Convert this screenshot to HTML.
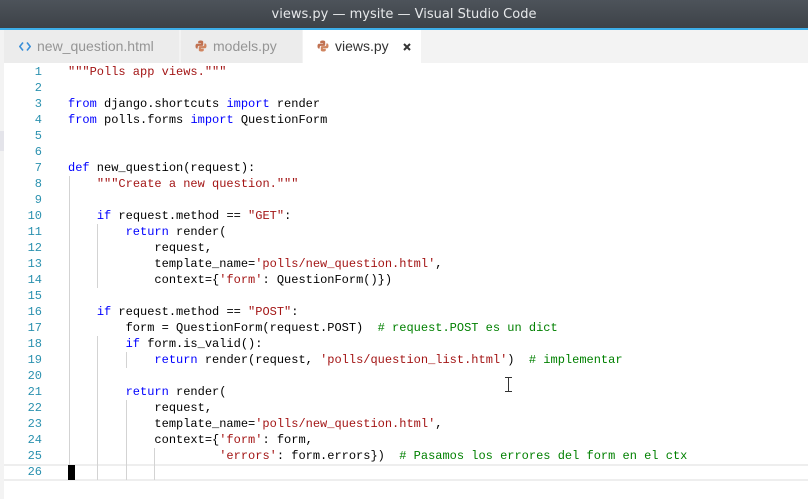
<!DOCTYPE html>
<html><head><meta charset="utf-8"><style>
*{margin:0;padding:0;box-sizing:border-box}
body{width:808px;height:499px;overflow:hidden;background:#fff;font-family:"Liberation Sans",sans-serif;position:relative}
#title{position:absolute;left:0;top:0;width:808px;height:28px;background:linear-gradient(#4d535a,#3d4248);color:#e6e8ea;font-size:13px;text-align:center;line-height:29px;font-family:"DejaVu Sans","Liberation Sans",sans-serif}
#bl{position:absolute;left:0;top:28px;width:808px;height:2px;background:#3daee9}
#tabs{position:absolute;left:0;top:30px;width:808px;height:33px;background:#f3f3f3}
.tab{position:absolute;top:0;height:33px;font-size:14px;line-height:33px;color:#959595;font-family:"Liberation Sans",sans-serif}
#strip{position:absolute;left:0;top:63px;width:4px;height:436px;background:#f3f3f3}
#strip2{position:absolute;left:0;top:131px;width:4px;height:20px;background:#e4e4ea}
.ln{position:absolute;left:0;width:42px;text-align:right;color:#2b91af;font:12px/16px "Liberation Mono",monospace}
.cd{position:absolute;left:68px;white-space:pre;color:#000;font:12px/16px "Liberation Mono",monospace}
.k{color:#0000ff}.s{color:#a31515}.c{color:#008000}
.g{position:absolute;width:1px;background:#d3d3d3}
#ed{position:absolute;left:0;top:1px;width:808px;height:499px}
</style></head><body>
<div id="title">views.py — mysite — Visual Studio Code</div>
<div id="bl"></div>
<div id="tabs">
 <div class="tab" style="left:4px;width:176px;background:#ececec;border-right:1px solid #f3f3f3"><svg style="position:absolute;left:15px;top:12px" width="12" height="9" viewBox="0 0 12 9"><path d="M4 0.5L0.8 4.5 4 8.5M8 0.5L11.2 4.5 8 8.5" fill="none" stroke="#3a8fd8" stroke-width="1.6"/></svg><span style="position:absolute;left:33px">new_question.html</span></div>
 <div class="tab" style="left:181px;width:121px;background:#ececec"><svg style="position:absolute;left:14px;top:10px" width="12" height="12" viewBox="0 0 12 12"><path d="M6 0.5C3 0.5 3.2 1.8 3.2 1.8V3.2H6.1V3.7H2C2 3.7 0.5 3.6 0.5 6.1 0.5 8.6 1.8 8.5 1.8 8.5H2.7V7.3C2.7 7.3 2.7 5.9 4.1 5.9H6.9C6.9 5.9 8.2 5.9 8.2 4.7V2C8.2 2 8.4 0.5 6 0.5Z" fill="#c07050"/><path d="M6 11.5C9 11.5 8.8 10.2 8.8 10.2V8.8H5.9V8.3H10C10 8.3 11.5 8.4 11.5 5.9 11.5 3.4 10.2 3.5 10.2 3.5H9.3V4.7C9.3 4.7 9.3 6.1 7.9 6.1H5.1C5.1 6.1 3.8 6.1 3.8 7.3V10C3.8 10 3.6 11.5 6 11.5Z" fill="#d08560"/></svg><span style="position:absolute;left:32px">models.py</span></div>
 <div class="tab" style="left:303px;width:118px;background:#fff;color:#333"><svg style="position:absolute;left:14px;top:10px" width="12" height="12" viewBox="0 0 12 12"><path d="M6 0.5C3 0.5 3.2 1.8 3.2 1.8V3.2H6.1V3.7H2C2 3.7 0.5 3.6 0.5 6.1 0.5 8.6 1.8 8.5 1.8 8.5H2.7V7.3C2.7 7.3 2.7 5.9 4.1 5.9H6.9C6.9 5.9 8.2 5.9 8.2 4.7V2C8.2 2 8.4 0.5 6 0.5Z" fill="#c07050"/><path d="M6 11.5C9 11.5 8.8 10.2 8.8 10.2V8.8H5.9V8.3H10C10 8.3 11.5 8.4 11.5 5.9 11.5 3.4 10.2 3.5 10.2 3.5H9.3V4.7C9.3 4.7 9.3 6.1 7.9 6.1H5.1C5.1 6.1 3.8 6.1 3.8 7.3V10C3.8 10 3.6 11.5 6 11.5Z" fill="#d08560"/></svg><span style="position:absolute;left:32px">views.py</span><svg style="position:absolute;left:100px;top:13px" width="8" height="8" viewBox="0 0 8 8"><path d="M1 1L7 7M7 1L1 7" stroke="#333" stroke-width="2"/></svg></div>
</div>
<div id="strip"></div><div id="strip2"></div>
<div id="ed">
<div style="position:absolute;left:4px;top:463px;width:804px;height:17px;border-top:2px solid #eeeeee;border-bottom:2px solid #eeeeee"></div>
<div class="g" style="left:69px;top:175px;height:304px"></div>
<div class="g" style="left:97px;top:223px;height:64px"></div>
<div class="g" style="left:97px;top:335px;height:144px"></div>
<div class="g" style="left:126px;top:351px;height:16px"></div>
<div class="g" style="left:126px;top:399px;height:80px"></div>
<div class="g" style="left:154px;top:447px;height:32px"></div>
<div style="position:absolute;left:68px;top:464px;width:7px;height:15px;background:#000"></div>
<div style="position:absolute;left:508px;top:376px;width:1px;height:15px;background:#333"></div>
<div style="position:absolute;left:505px;top:376px;width:7px;height:1px;background:#333"></div>
<div style="position:absolute;left:505px;top:390px;width:7px;height:1px;background:#333"></div>
<div class="ln" style="top:63px">1</div><div class="cd" style="top:63px"><span class="s">"""Polls app views."""</span></div>
<div class="ln" style="top:79px">2</div>
<div class="ln" style="top:95px">3</div><div class="cd" style="top:95px"><span class="k">from</span> django.shortcuts <span class="k">import</span> render</div>
<div class="ln" style="top:111px">4</div><div class="cd" style="top:111px"><span class="k">from</span> polls.forms <span class="k">import</span> QuestionForm</div>
<div class="ln" style="top:127px">5</div>
<div class="ln" style="top:143px">6</div>
<div class="ln" style="top:159px">7</div><div class="cd" style="top:159px"><span class="k">def</span> new_question(request):</div>
<div class="ln" style="top:175px">8</div><div class="cd" style="top:175px">    <span class="s">"""Create a new question."""</span></div>
<div class="ln" style="top:191px">9</div>
<div class="ln" style="top:207px">10</div><div class="cd" style="top:207px">    <span class="k">if</span> request.method == <span class="s">"GET"</span>:</div>
<div class="ln" style="top:223px">11</div><div class="cd" style="top:223px">        <span class="k">return</span> render(</div>
<div class="ln" style="top:239px">12</div><div class="cd" style="top:239px">            request,</div>
<div class="ln" style="top:255px">13</div><div class="cd" style="top:255px">            template_name=<span class="s">'polls/new_question.html'</span>,</div>
<div class="ln" style="top:271px">14</div><div class="cd" style="top:271px">            context={<span class="s">'form'</span>: QuestionForm()})</div>
<div class="ln" style="top:287px">15</div>
<div class="ln" style="top:303px">16</div><div class="cd" style="top:303px">    <span class="k">if</span> request.method == <span class="s">"POST"</span>:</div>
<div class="ln" style="top:319px">17</div><div class="cd" style="top:319px">        form = QuestionForm(request.POST)  <span class="c"># request.POST es un dict</span></div>
<div class="ln" style="top:335px">18</div><div class="cd" style="top:335px">        <span class="k">if</span> form.is_valid():</div>
<div class="ln" style="top:351px">19</div><div class="cd" style="top:351px">            <span class="k">return</span> render(request, <span class="s">'polls/question_list.html'</span>)  <span class="c"># implementar</span></div>
<div class="ln" style="top:367px">20</div>
<div class="ln" style="top:383px">21</div><div class="cd" style="top:383px">        <span class="k">return</span> render(</div>
<div class="ln" style="top:399px">22</div><div class="cd" style="top:399px">            request,</div>
<div class="ln" style="top:415px">23</div><div class="cd" style="top:415px">            template_name=<span class="s">'polls/new_question.html'</span>,</div>
<div class="ln" style="top:431px">24</div><div class="cd" style="top:431px">            context={<span class="s">'form'</span>: form,</div>
<div class="ln" style="top:447px">25</div><div class="cd" style="top:447px">                     <span class="s">'errors'</span>: form.errors})  <span class="c"># Pasamos los errores del form en el ctx</span></div>
<div class="ln" style="top:463px">26</div>
</div>
</body></html>
